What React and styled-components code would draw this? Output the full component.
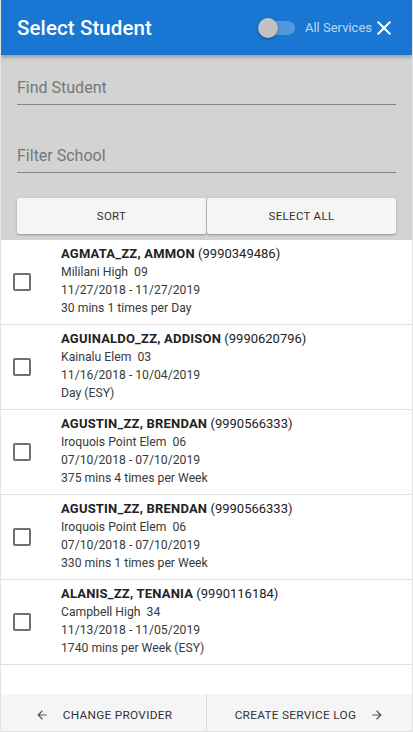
import React from "react";
import styled, { createGlobalStyle } from "styled-components";

const Global = createGlobalStyle`
  html, body { margin: 0; padding: 0; background: #fff; }
  body { font-family: Roboto, "Liberation Sans", Arial, sans-serif; }
  * { box-sizing: border-box; }
`;

const Page = styled.div`
  height: 732px;
  display: flex;
  flex-direction: column;
  border-left: 1px solid #e3e3e3;
  border-right: 1px solid #e3e3e3;
  background: #fff;
  overflow: hidden;
`;

const Header = styled.header`
  height: 55px;
  flex: none;
  background: #1976d2;
  display: flex;
  align-items: center;
  padding: 0 16px 0 16px;
  box-shadow: 0 2px 4px rgba(0, 0, 0, 0.3);
  position: relative;
  z-index: 2;
`;

const Title = styled.h1`
  margin: 0;
  flex: 1;
  color: #fff;
  font-size: 20.5px;
  font-weight: 500;
  letter-spacing: 0.1px;
`;

const SwitchTrack = styled.span`
  position: relative;
  width: 34px;
  height: 14px;
  border-radius: 7px;
  background: rgba(255, 255, 255, 0.25);
  margin-right: 10px;
`;

const SwitchThumb = styled.span`
  position: absolute;
  left: -3px;
  top: -3px;
  width: 20px;
  height: 20px;
  border-radius: 50%;
  background: #c2c2c2;
  box-shadow: 0 1px 3px rgba(0, 0, 0, 0.35);
`;

const SwitchLabel = styled.span`
  color: rgba(255, 255, 255, 0.72);
  font-size: 13px;
  margin-right: 0px;
`;

const CloseButton = styled.button`
  border: 0;
  background: none;
  padding: 0;
  display: flex;
  color: #fff;
  cursor: pointer;
`;

const Filters = styled.section`
  flex: none;
  background: #d3d3d3;
  padding: 16px 16px 6px 16px;
  display: flex;
  flex-direction: column;
`;

const Field = styled.input`
  display: block;
  width: 100%;
  height: 34px;
  margin-top: ${(p) => (p.$first ? "0" : "34px")};
  border: 0;
  border-bottom: 1px solid #858585;
  background: transparent;
  font-family: inherit;
  font-size: 16px;
  padding: 0;
  color: #333;
  outline: none;
  &::placeholder { color: #777; }
`;

const ButtonRow = styled.div`
  display: grid;
  grid-template-columns: 1fr 1fr;
  gap: 1px;
  margin-top: 25px;
`;

const ActionButton = styled.button`
  height: 36px;
  border: 0;
  border-radius: 2px;
  background: #f5f5f5;
  box-shadow: 0 1px 3px rgba(0, 0, 0, 0.2), 0 1px 1px rgba(0, 0, 0, 0.14);
  font-family: inherit;
  font-size: 11.5px;
  letter-spacing: 0.3px;
  color: #333;
  text-transform: uppercase;
`;

const List = styled.ul`
  flex: 1;
  margin: 0;
  padding: 0;
  list-style: none;
  overflow: hidden;
`;

const Item = styled.li`
  height: 85px;
  display: flex;
  align-items: center;
  border-bottom: 1px solid #e0e0e0;
`;

const CheckBox = styled.span`
  width: 18px;
  height: 18px;
  margin: 0 30px 0 12px;
  border: 2px solid #707070;
  border-radius: 2px;
  flex: none;
`;

const Info = styled.div`
  display: flex;
  flex-direction: column;
  font-size: 12.2px;
  line-height: 18px;
  color: #3a3a3a;
  margin-top: -2px;
`;

const Name = styled.div`
  font-size: 13px;
  color: #222;
  white-space: pre;
`;

const Bold = styled.b`
  font-weight: 700;
  letter-spacing: 0.2px;
`;

const Line = styled.div`
  white-space: pre;
`;

const Footer = styled.footer`
  flex: none;
  height: 38px;
  display: grid;
  grid-template-columns: 1fr 1fr;
  gap: 1px;
  background: #dcdcdc;
  border-bottom: 1px solid #e0e0e0;
`;

const FooterButton = styled.button`
  border: 0;
  background: #f5f5f5;
  display: flex;
  align-items: center;
  justify-content: center;
  gap: 14px;
  font-family: inherit;
  font-size: 11.8px;
  letter-spacing: 0.3px;
  color: #333;
  text-transform: uppercase;
  padding: 5px 0 0 0;
`;

const Arrow = ({ dir }) => (
  <svg width="14" height="14" viewBox="0 0 24 24" fill="#555">
    {dir === "left" ? (
      <path d="M20 11H7.83l5.59-5.59L12 4l-8 8 8 8 1.41-1.41L7.83 13H20v-2z" />
    ) : (
      <path d="M12 4l-1.41 1.41L16.17 11H4v2h12.17l-5.58 5.59L12 20l8-8z" />
    )}
  </svg>
);

const students = [
  { name: "AGMATA_ZZ, AMMON", id: "9990349486", school: "Mililani High  09", dates: "11/27/2018 - 11/27/2019", svc: "30 mins 1 times per Day" },
  { name: "AGUINALDO_ZZ, ADDISON", id: "9990620796", school: "Kainalu Elem  03", dates: "11/16/2018 - 10/04/2019", svc: "Day (ESY)" },
  { name: "AGUSTIN_ZZ, BRENDAN", id: "9990566333", school: "Iroquois Point Elem  06", dates: "07/10/2018 - 07/10/2019", svc: "375 mins 4 times per Week" },
  { name: "AGUSTIN_ZZ, BRENDAN", id: "9990566333", school: "Iroquois Point Elem  06", dates: "07/10/2018 - 07/10/2019", svc: "330 mins 1 times per Week" },
  { name: "ALANIS_ZZ, TENANIA", id: "9990116184", school: "Campbell High  34", dates: "11/13/2018 - 11/05/2019", svc: "1740 mins per Week (ESY)" },
];

export default function App() {
  return (
    <>
      <Global />
      <Page>
        <Header>
          <Title>Select Student</Title>
          <SwitchTrack>
            <SwitchThumb />
          </SwitchTrack>
          <SwitchLabel>All Services</SwitchLabel>
          <CloseButton aria-label="close">
            <svg width="24" height="24" viewBox="0 0 24 24" fill="currentColor">
              <path d="M19 6.41L17.59 5 12 10.59 6.41 5 5 6.41 10.59 12 5 17.59 6.41 19 12 13.41 17.59 19 19 17.59 13.41 12z" />
            </svg>
          </CloseButton>
        </Header>
        <Filters>
          <Field $first placeholder="Find Student" />
          <Field placeholder="Filter School" />
          <ButtonRow>
            <ActionButton>Sort</ActionButton>
            <ActionButton>Select All</ActionButton>
          </ButtonRow>
        </Filters>
        <List>
          {students.map((s, i) => (
            <Item key={i}>
              <CheckBox />
              <Info>
                <Name>
                  <Bold>{s.name}</Bold> ({s.id})
                </Name>
                <Line>{s.school}</Line>
                <Line>{s.dates}</Line>
                <Line>{s.svc}</Line>
              </Info>
            </Item>
          ))}
        </List>
        <Footer>
          <FooterButton>
            <Arrow dir="left" />
            Change Provider
          </FooterButton>
          <FooterButton>
            Create Service Log
            <Arrow dir="right" />
          </FooterButton>
        </Footer>
      </Page>
    </>
  );
}
